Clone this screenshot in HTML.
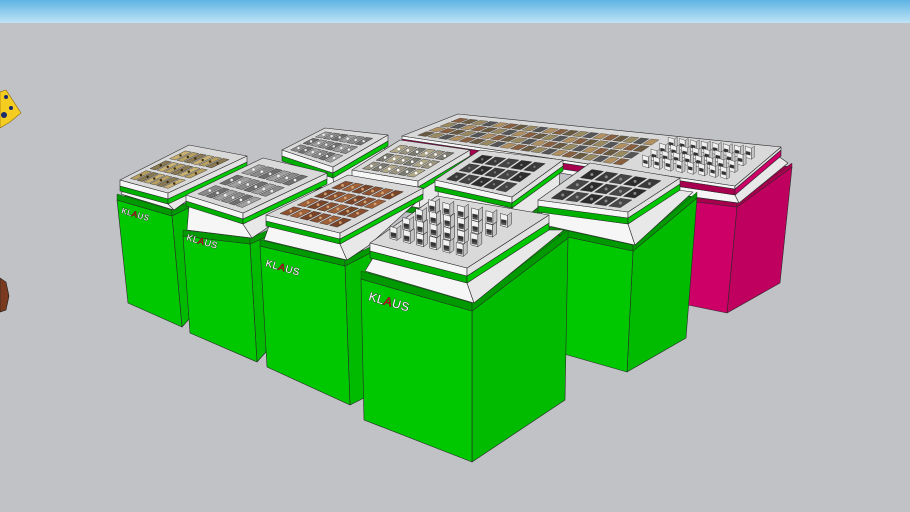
<!DOCTYPE html>
<html><head><meta charset="utf-8"><style>
html,body{margin:0;padding:0;width:910px;height:512px;overflow:hidden;background:#c1c2c6}
svg{display:block}
</style></head><body>
<svg id="s" width="910" height="512" viewBox="0 0 910 512" xmlns="http://www.w3.org/2000/svg">
<defs><linearGradient id="sky" x1="0" y1="0" x2="0" y2="1"><stop offset="0" stop-color="#5fb4e4"/><stop offset="1" stop-color="#bfe3f5"/></linearGradient></defs>
<rect width="910" height="512" fill="#c1c2c6"/>
<rect width="910" height="23" fill="url(#sky)"/>
<polygon points="0,92 6,90 21,113 10,122 0,128" fill="#f5cc20" stroke="#8a6a10" stroke-width="0.6"/>
<circle cx="4" cy="115" r="3" fill="#1a2a6a"/><circle cx="11" cy="108" r="2" fill="#1a2a6a"/><circle cx="6" cy="97" r="2" fill="#1a2a6a"/>
<polygon points="0,278 6,282 9,296 6,310 0,312" fill="#7a3a20" stroke="#222" stroke-width="0.6"/>
<g id="g"></g>
</svg>
<script>
var g=document.getElementById('g');
function P(pts,fill,sw){var p=document.createElementNS('http://www.w3.org/2000/svg','polygon');p.setAttribute('points',pts.map(function(a){return a[0]+','+a[1]}).join(' '));p.setAttribute('fill',fill);p.setAttribute('stroke','#2a2a2a');p.setAttribute('stroke-width',sw==null?0.6:sw);p.setAttribute('stroke-linejoin','round');g.appendChild(p);}
function add(a,b){return [a[0]+b[0],a[1]+b[1]]}
function dn(a,d){return [a[0],a[1]+d]}
function lerp(a,b,t){return [a[0]+(b[0]-a[0])*t,a[1]+(b[1]-a[1])*t]}
function bil(L,F,R,B,s,r){var a=lerp(L,F,s),b=lerp(B,R,s);return lerp(a,b,r);}
function unit(o){
 var c=o.c||['#00c800','#00bb00','#009a00'];
 var bx=o.box;
 if(bx){
  P([bx.Q,bx.S,bx.Sb,bx.Qb],c[1]);
  P([bx.P,bx.Q,bx.Qb,bx.Pb],c[0]);
  var T=add(bx.P,[bx.S[0]-bx.Q[0],bx.S[1]-bx.Q[1]]);
  P([bx.P,bx.Q,bx.S,T],c[2]);
 }
 var L=o.L,F=o.F,R=o.R,B=o.B,t=o.t||6,gs=o.g||5;
 var sh=o.sh||3;
 var bt=bx?bx:{P:dn(L,t+gs+o.bh),Q:dn(F,t+gs+o.bh),S:dn(R,t+gs+o.bh)};
 var Lw=add(dn(L,t+gs),[sh,0]),Fw=dn(F,t+gs),Rw=add(dn(R,t+gs),[-sh,0]);
 var bd=o.bd||6;
 // dark band at box top
 P([[bt.P[0],bt.P[1]-bd],[bt.Q[0],bt.Q[1]-bd],bt.Q,bt.P],c[2],0.4);
 P([[bt.Q[0],bt.Q[1]-bd],[bt.S[0],bt.S[1]-bd],bt.S,bt.Q],c[2],0.4);
 P([Lw,Fw,[bt.Q[0]+2,bt.Q[1]-bd],[bt.P[0]+4,bt.P[1]-bd]],'#f6f6f6');
 P([Fw,Rw,[bt.S[0]-4,bt.S[1]-bd],[bt.Q[0]+2,bt.Q[1]-bd]],'#e8e8e8');
 P([dn(L,t),dn(F,t),dn(F,t+gs),dn(L,t+gs)],c[2]==='#009a00'?'#00b000':c[2]);
 P([dn(F,t),dn(R,t),dn(R,t+gs),dn(F,t+gs)],c[0]);
 P([L,F,dn(F,t),dn(L,t)],'#f6f6f6');
 P([F,R,dn(R,t),dn(F,t)],'#e2e2e2');
 P([L,F,R,B],'#d9d9d9');
 if(o.grid){var n=o.grid[0],m=o.grid[1],cols=o.gc;
  for(var i=0;i<n;i++)for(var j=0;j<m;j++){
   var s0=0.08+0.84*i/n,s1=0.08+0.84*(i+0.8)/n,r0=0.1+0.8*j/m,r1=0.1+0.8*(j+0.8)/m;
   var q=[bil(L,F,R,B,r0,s0),bil(L,F,R,B,r1,s0),bil(L,F,R,B,r1,s1),bil(L,F,R,B,r0,s1)];
   P(q,cols[(i+j)%cols.length],0.4);
   var cx=(q[0][0]+q[2][0])/2,cy=(q[0][1]+q[2][1])/2;
   if(o.dot){var d=document.createElementNS('http://www.w3.org/2000/svg','circle');d.setAttribute('cx',cx);d.setAttribute('cy',cy);d.setAttribute('r',o.dot);d.setAttribute('fill',o.dc||'#222');g.appendChild(d);}
  }}
 if(o.sw){var n=o.sw[0],m=o.sw[1];
  for(var i=n-1;i>=0;i--)for(var j=0;j<m;j++){
   var p=bil(L,F,R,B,0.1+0.8*j/m,0.15+0.75*i/n);
   var w=o.sww||6,h=o.swh||14;
   P([[p[0],p[1]-h],[p[0]+w,p[1]-h+2],[p[0]+w,p[1]+2],[p[0],p[1]]],'#f2f2f2',0.5);
   P([[p[0]+w,p[1]-h+2],[p[0]+w+4,p[1]-h-1],[p[0]+w+4,p[1]-1],[p[0]+w,p[1]+2]],'#c4c4c4',0.5);
   P([[p[0]+1,p[1]-h/2],[p[0]+w-1,p[1]-h/2+1],[p[0]+w-1,p[1]-h/2+4],[p[0]+1,p[1]-h/2+3]],'#333',0.3);
   P([[p[0]+1,p[1]-3],[p[0]+w-1,p[1]-2],[p[0]+w-1,p[1]],[p[0]+1,p[1]-1]],'#555',0.2);
  }}
}
function klaus(x,y,sz){
 var t=document.createElementNS('http://www.w3.org/2000/svg','text');
 t.setAttribute('x',x);t.setAttribute('y',y);t.setAttribute('font-family','Liberation Sans, sans-serif');
 t.setAttribute('font-size',sz);t.setAttribute('fill','#ffffff');t.setAttribute('stroke','#333');t.setAttribute('stroke-width','0.8');
 t.setAttribute('paint-order','stroke');
 t.setAttribute('transform','rotate(16 '+x+' '+y+')');t.setAttribute('letter-spacing','0.5');
 t.innerHTML='KL<tspan fill="#d01010">A</tspan>US';g.appendChild(t);
}
var pinkC=['#cc0066','#c0005e','#a8004f'];
unit({L:[402,136],B:[458,114],R:[781,147],F:[735,186],t:3,g:6,c:pinkC,bd:4,
 box:{P:[690,201],Q:[737,207],S:[792,167],Pb:[688,305],Qb:[727,313],Sb:[780,283]}});
(function(){var L=[402,136],B=[458,114],R=[781,147],F=[735,186];
 var cols=['#6a5a40','#9a8a60','#555','#b09060','#886040'];
 for(var i=0;i<4;i++)for(var j=0;j<20;j++){
  var s0=0.1+0.8*i/4,s1=s0+0.16,r0=0.03+0.62*j/20,r1=r0+0.025;
  P([bil(L,F,R,B,r0,s0),bil(L,F,R,B,r1,s0),bil(L,F,R,B,r1,s1),bil(L,F,R,B,r0,s1)],cols[(i*3+j)%5],0.3);}
 for(var i=3;i>=0;i--)for(var j=0;j<8;j++){var p=bil(L,F,R,B,0.7+0.27*j/8,0.15+0.7*i/4);
  P([[p[0],p[1]-11],[p[0]+6,p[1]-9],[p[0]+6,p[1]+2],[p[0],p[1]]],'#f0f0f0',0.4);
  P([[p[0]+6,p[1]-9],[p[0]+9,p[1]-11],[p[0]+9,p[1]],[p[0]+6,p[1]+2]],'#c4c4c4',0.4);
  P([[p[0]+1,p[1]-6],[p[0]+5,p[1]-5],[p[0]+5,p[1]-2],[p[0]+1,p[1]-3]],'#333',0.3);}
})();
var gray=['#8a8a8a','#6f6f6f','#a0a0a0'];
unit({L:[282,150],B:[325,128],R:[388,135],F:[333,167],bh:20,grid:[3,6],gc:gray,dot:1.2,dc:'#eee'});
unit({L:[352,170],B:[400,140],R:[470,150],F:[418,181],bh:22,grid:[3,6],gc:['#9a9480','#7a7a70','#b0a888'],dot:1.3,dc:'#fff'});
unit({L:[435,180],B:[480,150],R:[563,160],F:[512,197],bh:25,grid:[3,5],gc:['#3a3a3a','#444','#2e2e2e'],dot:1.2,dc:'#777'});
unit({L:[538,200],B:[590,163],R:[680,178],F:[628,212],g:6,
 box:{P:[545,232],Q:[633,251],S:[697,198],Pb:[550,350],Qb:[627,372],Sb:[686,338]},grid:[3,5],gc:['#3a3a3a','#474747','#2c2c2c'],dot:1.5,dc:'#888'});
unit({L:[120,180],B:[189,145],R:[247,156],F:[168,193],
 box:{P:[117,200],Q:[172,216],S:[192,206],Pb:[128,303],Qb:[182,327],Sb:[190,318]},grid:[3,6],gc:['#b8a060','#8a7850','#c8b070'],dot:1.2,dc:'#3a2a10'});
klaus(121,213,8);
unit({L:[186,195],B:[263,158],R:[327,173],F:[243,213],
 box:{P:[183,236],Q:[250,244],S:[268,236],Pb:[190,333],Qb:[257,362],Sb:[266,352]},grid:[3,6],gc:gray,dot:1.3,dc:'#eee'});
klaus(186,240,9);
unit({L:[266,215],B:[348,175],R:[423,188],F:[340,233],
 box:{P:[260,246],Q:[345,266],S:[372,252],Pb:[267,367],Qb:[350,405],Sb:[370,395]},grid:[4,6],gc:['#8a5030','#a06038','#7a4428'],dot:1.4,dc:'#d0a070'});
klaus(265,266,10);
unit({L:[370,243],B:[437,196],R:[549,215],F:[467,268],t:8,g:7,bd:8,
 box:{P:[361,279],Q:[472,311],S:[568,238],Pb:[364,420],Qb:[472,462],Sb:[565,400]},sw:[4,6],sww:7,swh:12});
klaus(368,300,12);
</script>
</body></html>
